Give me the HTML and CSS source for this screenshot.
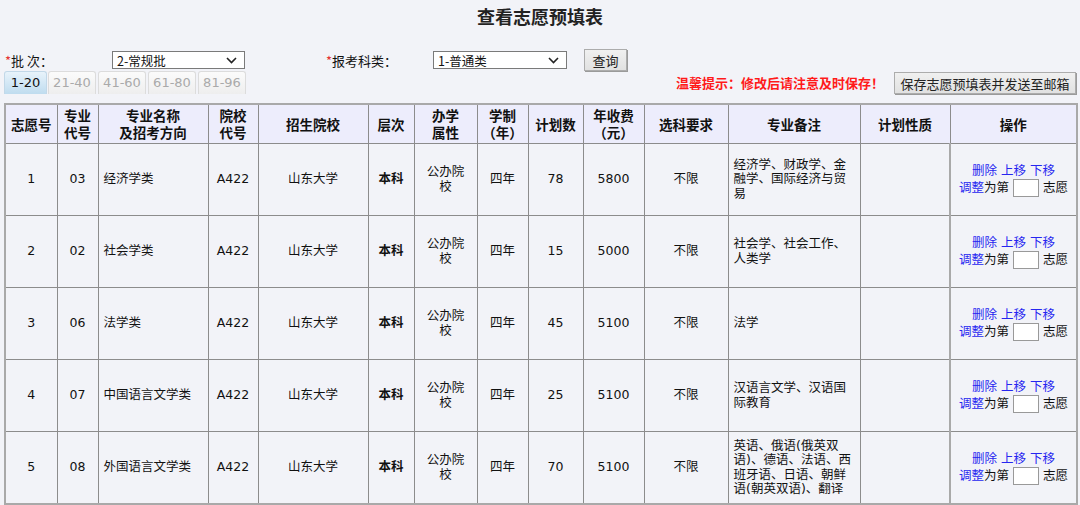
FILE: index.html
```html
<!DOCTYPE html>
<html lang="zh-CN">
<head>
<meta charset="utf-8">
<title>查看志愿预填表</title>
<link rel="stylesheet" href="styles.css">
</head>
<body>
<h1 class="title">查看志愿预填表</h1>

<div class="filters">
  <span class="label"><span class="req">*</span>批&nbsp;次：</span>
  <div class="selectbox sel1"><span>2-常规批</span><svg width="11" height="7" viewBox="0 0 11 7"><path d="M1 1l4.5 4.5L10 1" fill="none" stroke="#222" stroke-width="1.6"/></svg></div>
  <span class="label label2"><span class="req">*</span>报考科类：</span>
  <div class="selectbox sel2"><span>1-普通类</span><svg width="11" height="7" viewBox="0 0 11 7"><path d="M1 1l4.5 4.5L10 1" fill="none" stroke="#222" stroke-width="1.6"/></svg></div>
  <button class="btn btn-query">查询</button>
</div>

<div class="tabsbar">
  <div class="tabs">
    <span class="tab active">1-20</span>
    <span class="tab">21-40</span>
    <span class="tab">41-60</span>
    <span class="tab">61-80</span>
    <span class="tab">81-96</span>
  </div>
  <div class="spacer"></div>
  <span class="warn">温馨提示：修改后请注意及时保存！</span>
  <button class="btn btn-save">保存志愿预填表并发送至邮箱</button>
</div>

<table class="grid">
  <colgroup>
    <col style="width:52px"><col style="width:41px"><col style="width:110px"><col style="width:50px">
    <col style="width:110px"><col style="width:46px"><col style="width:63px"><col style="width:51px">
    <col style="width:55px"><col style="width:61px"><col style="width:84px"><col style="width:132px">
    <col style="width:90px"><col style="width:127px">
  </colgroup>
  <thead>
    <tr>
      <th>志愿号</th><th>专业<br>代号</th><th>专业名称<br>及招考方向</th><th>院校<br>代号</th>
      <th>招生院校</th><th>层次</th><th>办学<br>属性</th><th>学制<br>（年）</th>
      <th>计划数</th><th>年收费<br>（元）</th><th>选科要求</th><th>专业备注</th>
      <th>计划性质</th><th>操作</th>
    </tr>
  </thead>
  <tbody>
    <tr>
      <td>1</td><td>03</td><td class="name">经济学类</td><td>A422</td><td>山东大学</td><td class="lvl">本科</td>
      <td class="attr">公办院<br>校</td><td>四年</td><td>78</td><td>5800</td><td>不限</td>
      <td class="note">经济学、财政学、金<br>融学、国际经济与贸<br>易</td><td></td>
      <td class="ops"><div><a href="#">删除</a> <a href="#">上移</a> <a href="#">下移</a></div><div><a href="#">调整</a>为第 <input class="order" type="text"> 志愿</div></td>
    </tr>
    <tr>
      <td>2</td><td>02</td><td class="name">社会学类</td><td>A422</td><td>山东大学</td><td class="lvl">本科</td>
      <td class="attr">公办院<br>校</td><td>四年</td><td>15</td><td>5000</td><td>不限</td>
      <td class="note">社会学、社会工作、<br>人类学</td><td></td>
      <td class="ops"><div><a href="#">删除</a> <a href="#">上移</a> <a href="#">下移</a></div><div><a href="#">调整</a>为第 <input class="order" type="text"> 志愿</div></td>
    </tr>
    <tr>
      <td>3</td><td>06</td><td class="name">法学类</td><td>A422</td><td>山东大学</td><td class="lvl">本科</td>
      <td class="attr">公办院<br>校</td><td>四年</td><td>45</td><td>5100</td><td>不限</td>
      <td class="note">法学</td><td></td>
      <td class="ops"><div><a href="#">删除</a> <a href="#">上移</a> <a href="#">下移</a></div><div><a href="#">调整</a>为第 <input class="order" type="text"> 志愿</div></td>
    </tr>
    <tr>
      <td>4</td><td>07</td><td class="name">中国语言文学类</td><td>A422</td><td>山东大学</td><td class="lvl">本科</td>
      <td class="attr">公办院<br>校</td><td>四年</td><td>25</td><td>5100</td><td>不限</td>
      <td class="note">汉语言文学、汉语国<br>际教育</td><td></td>
      <td class="ops"><div><a href="#">删除</a> <a href="#">上移</a> <a href="#">下移</a></div><div><a href="#">调整</a>为第 <input class="order" type="text"> 志愿</div></td>
    </tr>
    <tr>
      <td>5</td><td>08</td><td class="name">外国语言文学类</td><td>A422</td><td>山东大学</td><td class="lvl">本科</td>
      <td class="attr">公办院<br>校</td><td>四年</td><td>70</td><td>5100</td><td>不限</td>
      <td class="note">英语、俄语(俄英双<br>语)、德语、法语、西<br>班牙语、日语、朝鲜<br>语(朝英双语)、翻译</td><td></td>
      <td class="ops"><div><a href="#">删除</a> <a href="#">上移</a> <a href="#">下移</a></div><div><a href="#">调整</a>为第 <input class="order" type="text"> 志愿</div></td>
    </tr>
  </tbody>
</table>
</body>
</html>
```
FILE: styles.css
```css
html, body {
  margin: 0;
  background: #f2f3f8;
}
body {
  font-family: "DejaVu Sans", "Noto Sans CJK SC", sans-serif;
  font-size: 12.5px;
  color: #111;
}
.title {
  margin: 0;
  height: 32px;
  text-align: center;
  font: bold 18px/32px "Noto Sans CJK SC", serif;
  color: #222;
}
.filters {
  display: flex;
  align-items: center;
  height: 22px;
  margin-top: 17px;
  padding-left: 5px;
  font-family: "Noto Sans CJK SC", sans-serif;
  font-size: 13px;
}
.label {
  width: 107px;
  color: #111;
}
.label2 {
  margin-left: 81px;
}
.req {
  color: #e53333;
}
.selectbox {
  box-sizing: border-box;
  height: 18px;
  border: 1px solid #7a7a7a;
  background: #fff;
  display: flex;
  align-items: center;
  justify-content: space-between;
  padding: 0 7px 0 4px;
  font-size: 12.5px;
  color: #111;
}
.sel1 { width: 133px; }
.sel2 { width: 134px; }
.btn {
  box-sizing: border-box;
  height: 22px;
  border: 1px solid #acacac;
  border-radius: 0;
  background: linear-gradient(#f0f0f0, #e1e1e1);
  font-family: "Noto Sans CJK SC", sans-serif;
  font-size: 13px;
  color: #222;
  padding: 0;
  box-shadow: 1px 1px 0 #9a9a9a;
}
.btn-query {
  width: 43px;
  margin-left: 17px;
}
.tabsbar {
  display: flex;
  align-items: flex-end;
  height: 23px;
  padding: 0 4px;
}
.tabs {
  display: flex;
  align-items: flex-end;
}
.tab {
  box-sizing: border-box;
  width: 48px;
  height: 23px;
  margin-right: 2px;
  border: 1px solid #dcdcdc;
  border-bottom: none;
  border-radius: 3px 3px 0 0;
  background: linear-gradient(#fbfbfb, #eeeeee);
  color: #aaa;
  font-size: 13px;
  line-height: 22px;
  text-align: center;
}
.tab.active {
  width: 43px;
  margin-right: 1px;
  border-color: #c2d8e8;
  background: linear-gradient(#e8f3fb, #bfdcef);
  color: #111;
}
.spacer { flex: 1; }
.warn {
  font-family: "Noto Sans CJK SC", sans-serif;
  font-weight: bold;
  font-size: 13px;
  color: #ff1a1a;
  line-height: 22px;
  margin-right: 10px;
}
.btn-save {
  width: 182px;
}
.grid {
  margin: 9px 0 0 4px;
  width: 1072px;
  table-layout: fixed;
  border-collapse: collapse;
  border: 2px solid #a9a9a9;
}
.grid th, .grid td {
  border: 1px solid #8c8c8c;
  text-align: center;
  vertical-align: middle;
  padding: 0;
}
.grid th {
  height: 38px;
  background: #ededfc;
  font-family: "Noto Sans CJK SC", sans-serif;
  font-weight: bold;
  font-size: 13.5px;
  line-height: 17px;
  color: #111;
}
.grid td {
  height: 71px;
  line-height: 14.5px;
}
.grid td.name, .grid td.note {
  text-align: left;
  padding-left: 5px;
}
.grid td.note {
  white-space: nowrap;
}
.grid td.lvl {
  font-weight: bold;
}
.grid td.ops {
  line-height: 17px;
  border-left: 2px solid #a9a9a9;
}
.ops a {
  color: #2626f0;
  text-decoration: none;
}
.order {
  box-sizing: border-box;
  width: 26px;
  height: 18px;
  border: 1px solid #999;
  background: #fff;
  padding: 0;
  margin: 0;
  vertical-align: middle;
}
```
